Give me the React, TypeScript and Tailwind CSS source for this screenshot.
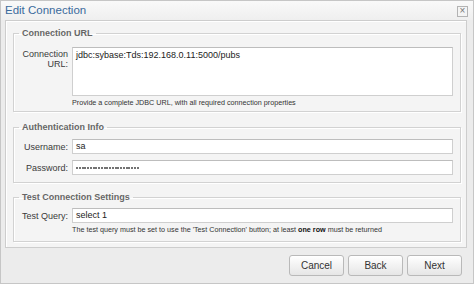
import React from 'react';

const font = { fontFamily: '"Liberation Sans", Arial, sans-serif' };

function Group({ title, children, className = '' }: { title: string; children: React.ReactNode; className?: string }) {
  return (
    <fieldset
      className={`border border-[#d2d2d2] shadow-[inset_1px_1px_0_#ffffff,1px_1px_0_#ffffff] ${className}`}
    >
      <legend className="ml-[5px] px-[3px] text-[9px] leading-[12px] font-bold text-[#666]">{title}</legend>
      {children}
    </fieldset>
  );
}

function Field({ label, value, password = false }: { label: string; value: string; password?: boolean }) {
  return (
    <div className="flex items-center gap-[4px] pr-[7px]">
      <div className="w-[54px] text-right text-[9px] leading-[10px] text-[#3a3a3a]">{label}</div>
      <div className="flex-1 h-[15px] bg-white border border-[#cfcfcf] border-t-[#bdbdbd] flex items-center px-[3px] text-[9px] text-[#222]">
        {password ? (
          <span className="flex gap-[0.75px]">
            {[...Array(23)].map((_, i) => (
              <span key={i} className="w-[2px] h-[2px] rounded-full bg-[#444]" />
            ))}
          </span>
        ) : (
          value
        )}
      </div>
    </div>
  );
}

function Btn({ label }: { label: string }) {
  return (
    <button className="w-[55px] h-[21px] rounded-[3px] border border-[#b9b9b9] bg-gradient-to-b from-[#ffffff] to-[#e6e6e6] text-[10px] text-[#333] shadow-[inset_0_1px_0_#fff]">
      {label}
    </button>
  );
}

export default function App() {
  return (
    <div style={font} className="w-[474px] h-[284px] bg-[#ececec] border border-[#c6c6c6] flex flex-col">
      {/* title bar */}
      <div className="h-[19px] flex items-center justify-between pl-[4px] pr-[5px] bg-gradient-to-b from-[#f9f9f9] to-[#efefef]">
        <span className="text-[11.5px] text-[#3a6a9c] leading-none pt-[1px]">Edit Connection</span>
        <span className="w-[11px] h-[11px] border border-[#b3b3b3] bg-[#f4f4f4] flex items-center justify-center text-[10px] leading-none text-[#777] mt-[1px]">
          ×
        </span>
      </div>

      {/* body */}
      <div className="ml-[4px] w-[462px] h-[228px] border border-[#cdcdcd] bg-[#f4f4f4] shadow-[inset_1px_1px_0_#ffffff] pt-[6px] pl-[7px] flex flex-col">
        <Group title="Connection URL" className="w-[448px] pb-[4px]">
          <div className="flex gap-[4px] pt-[8px] pr-[7px]">
            <div className="w-[54px] text-right text-[9px] leading-[10px] text-[#3a3a3a] pt-[2px]">
              Connection
              <br />
              URL:
            </div>
            <div className="flex-1 h-[49px] bg-white border border-[#cfcfcf] border-t-[#bdbdbd] px-[3px] pt-[2px] text-[9px] leading-[10px] text-[#222]">
              jdbc:sybase:Tds:192.168.0.11:5000/pubs
            </div>
          </div>
          <div className="ml-[58px] mt-[2px] text-[7.2px] leading-[9px] text-[#333]">
            Provide a complete JDBC URL, with all required connection properties
          </div>
        </Group>

        <Group title="Authentication Info" className="w-[448px] mt-[9px] pb-[7px]">
          <div className="flex flex-col gap-[6px] pt-[6px]">
            <Field label="Username:" value="sa" />
            <Field label="Password:" value="" password />
          </div>
        </Group>

        <Group title="Test Connection Settings" className="w-[448px] mt-[8px] pb-[7px]">
          <div className="pt-[5px]">
            <Field label="Test Query:" value="select 1" />
          </div>
          <div className="ml-[58px] mt-[2px] text-[7.2px] leading-[9px] text-[#333]">
            The test query must be set to use the 'Test Connection' button; at least <b className="text-[#111]">one row</b> must
            be returned
          </div>
        </Group>
      </div>

      {/* footer */}
      <div className="flex justify-end gap-[4px] pt-[7px] pr-[11px]">
        <Btn label="Cancel" />
        <Btn label="Back" />
        <Btn label="Next" />
      </div>
    </div>
  );
}
